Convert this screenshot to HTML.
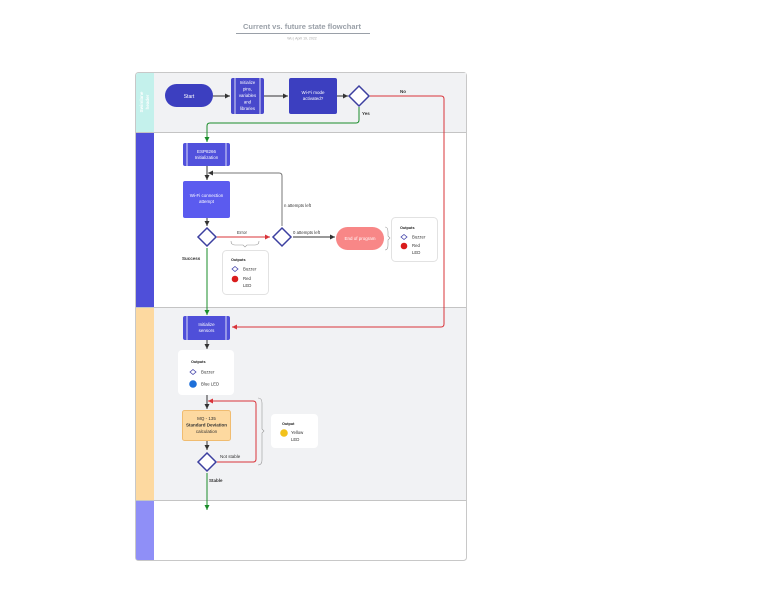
<!DOCTYPE html>
<html><head><meta charset="utf-8"><style>
body{margin:0;background:#fff;}
svg{display:block;font-family:"Liberation Sans",sans-serif;}
</style></head><body>
<svg width="768" height="593" viewBox="0 0 768 593">
<defs>
<marker id="ak" markerWidth="6" markerHeight="6" refX="5" refY="3" orient="auto"><path d="M0,0.5 L5,3 L0,5.5z" fill="#333"/></marker>
<marker id="ar" markerWidth="6" markerHeight="6" refX="5" refY="3" orient="auto"><path d="M0,0.5 L5,3 L0,5.5z" fill="#d9343a"/></marker>
<marker id="ag" markerWidth="6" markerHeight="6" refX="5" refY="3" orient="auto"><path d="M0,0.5 L5,3 L0,5.5z" fill="#1a8c2a"/></marker>
</defs>
<text x="302" y="29" font-size="7.5" font-weight="bold" fill="#9aa0a8" text-anchor="middle">Current vs. future state flowchart</text>
<line x1="236" y1="33.5" x2="370" y2="33.5" stroke="#9aa0a8" stroke-width="1"/>
<text x="302" y="39.5" font-size="3.5" fill="#aaa" text-anchor="middle">Wu  |  April 19, 2022</text>

<!-- lanes -->
<rect x="135.5" y="72.5" width="331" height="488" rx="3" fill="#fff" stroke="#c8c8c8"/>
<rect x="154" y="73" width="312" height="59" fill="#f1f2f4"/>
<rect x="154" y="308" width="312" height="192" fill="#f1f2f4"/>
<path d="M138,73 H154 V132 H136 V76 Q136,73 138,73z" fill="#c4f1ec"/>
<rect x="136" y="132" width="18" height="176" fill="#4f4fd9"/>
<rect x="136" y="308" width="18" height="192" fill="#fdd9a0"/>
<path d="M136,500 H154 V560 H138 Q136,560 136,558z" fill="#8f8ff7"/>
<line x1="136" y1="132.5" x2="466" y2="132.5" stroke="#c4c4c4"/>
<line x1="136" y1="307.5" x2="466" y2="307.5" stroke="#c4c4c4"/>
<line x1="136" y1="500.5" x2="466" y2="500.5" stroke="#c4c4c4"/>
<text transform="translate(143,102) rotate(-90)" font-size="4.5" font-weight="bold" fill="#fff" text-anchor="middle">Swimlane</text>
<text transform="translate(149,102) rotate(-90)" font-size="4.5" font-weight="bold" fill="#fff" text-anchor="middle">header</text>

<!-- connectors -->
<g fill="none" stroke-width="1">
<path d="M213,96 H230" stroke="#333" marker-end="url(#ak)"/>
<path d="M264,96 H288" stroke="#333" marker-end="url(#ak)"/>
<path d="M337,96 H348" stroke="#333" marker-end="url(#ak)"/>
<path d="M370,96 H441 Q444,96 444,99 V324 Q444,327 441,327 H232" stroke="#d9343a" marker-end="url(#ar)"/>
<path d="M359,107 V120 Q359,123 356,123 H210 Q207,123 207,126 V142" stroke="#1a8c2a" marker-end="url(#ag)"/>
<path d="M207,166 V180" stroke="#333" marker-end="url(#ak)"/>
<path d="M207,218 V226" stroke="#333" marker-end="url(#ak)"/>
<path d="M217,237 H270" stroke="#d9343a" marker-end="url(#ar)"/>
<path d="M282,226 V176 Q282,173 279,173 H208" stroke="#777" marker-end="url(#ak)"/>
<path d="M293,237 H335" stroke="#333" marker-end="url(#ak)"/>
<path d="M207,248 V315" stroke="#1a8c2a" marker-end="url(#ag)"/>
<path d="M207,340 V349" stroke="#333" marker-end="url(#ak)"/>
<path d="M207,395 V409" stroke="#333" marker-end="url(#ak)"/>
<path d="M207,440 V450" stroke="#333" marker-end="url(#ak)"/>
<path d="M217,462 H253 Q256,462 256,459 V404 Q256,401 253,401 H208" stroke="#d9343a" marker-end="url(#ar)"/>
<path d="M207,473 V510" stroke="#1a8c2a" marker-end="url(#ag)"/>
<path d="M231,241 Q231,245 235,245 H243 L245,247 L247,245 H255 Q259,245 259,241" stroke="#999" stroke-width="0.6"/>
<path d="M385,227 Q388,227 388,232 V236 L390,238 L388,240 V245 Q388,250 385,250" stroke="#999" stroke-width="0.6"/>
<path d="M258,398 Q262,398 262,403 V429 L264,431 L262,433 V460 Q262,465 258,465" stroke="#999" stroke-width="0.6"/>
</g>

<!-- shapes -->
<rect x="165" y="84" width="48" height="23" rx="11.5" fill="#3c3fc0"/>
<text x="189" y="98" font-size="5" fill="#fff" text-anchor="middle">Start</text>
<rect x="231" y="78" width="33" height="36" rx="2" fill="#4848cc"/>
<line x1="235" y1="78" x2="235" y2="114" stroke="#fff" stroke-width="0.8"/>
<line x1="260" y1="78" x2="260" y2="114" stroke="#fff" stroke-width="0.8"/>
<text font-size="4.3" fill="#fff" text-anchor="middle"><tspan x="247.5" y="84">Initialize</tspan><tspan x="247.5" y="90.5">pins,</tspan><tspan x="247.5" y="97">variables</tspan><tspan x="247.5" y="103.5">and</tspan><tspan x="247.5" y="110">libraries</tspan></text>
<rect x="289" y="78" width="48" height="36" rx="2" fill="#3c3fc0"/>
<text font-size="4.5" fill="#fff" text-anchor="middle"><tspan x="313" y="94">Wi-Fi mode</tspan><tspan x="313" y="100">activated?</tspan></text>
<path d="M359,86 L369,96 L359,106 L349,96z" fill="#fff" stroke="#3c3fa0" stroke-width="1.5"/>
<text x="400" y="93" font-size="4.5" font-weight="bold" fill="#333">No</text>
<text x="362" y="115" font-size="4.5" font-weight="bold" fill="#333">Yes</text>

<rect x="183" y="143" width="47" height="23" rx="2" fill="#5151dc"/>
<line x1="187" y1="143" x2="187" y2="166" stroke="#fff" stroke-width="0.8"/>
<line x1="226" y1="143" x2="226" y2="166" stroke="#fff" stroke-width="0.8"/>
<text font-size="4.5" fill="#fff" text-anchor="middle"><tspan x="206.5" y="153">ESP8266</tspan><tspan x="206.5" y="159">Initialization</tspan></text>
<rect x="183" y="181" width="47" height="37" rx="2" fill="#5b5bef"/>
<text font-size="4.5" fill="#fff" text-anchor="middle"><tspan x="206.5" y="197">Wi-Fi connection</tspan><tspan x="206.5" y="203">attempt</tspan></text>
<path d="M207,228 L216,237 L207,246 L198,237z" fill="#fff" stroke="#3c3fa0" stroke-width="1.5"/>
<path d="M282,228 L291,237 L282,246 L273,237z" fill="#fff" stroke="#3c3fa0" stroke-width="1.5"/>
<text x="237" y="234" font-size="4.5" fill="#333">Error</text>
<text x="284" y="207" font-size="4.3" fill="#333">n attempts left</text>
<text x="293" y="234" font-size="4.3" fill="#333">0 attempts left</text>
<text x="182" y="260" font-size="4.5" font-weight="bold" fill="#333">Success</text>
<rect x="336" y="227" width="48" height="23" rx="11.5" fill="#f88787"/>
<text x="360" y="240" font-size="4.5" fill="#fff" text-anchor="middle">End of program</text>

<rect x="391.5" y="217.5" width="46" height="44" rx="4" fill="#fff" stroke="#e2e2e2"/>
<text x="400" y="229" font-size="3.8" font-weight="bold" fill="#222">Outputs</text>
<path d="M404,234.5 L407,237 L404,239.5 L401,237z" fill="#fff" stroke="#4444aa" stroke-width="0.8"/>
<text x="412" y="238.5" font-size="4.3" fill="#333">Buzzer</text>
<circle cx="404" cy="246" r="3.3" fill="#d91c1c"/>
<text font-size="4.3" fill="#333"><tspan x="412" y="247">Red</tspan><tspan x="412" y="254">LED</tspan></text>

<rect x="222.5" y="250.5" width="46" height="44" rx="4" fill="#fff" stroke="#e2e2e2"/>
<text x="231" y="261" font-size="3.8" font-weight="bold" fill="#222">Outputs</text>
<path d="M235,266.5 L238,269 L235,271.5 L232,269z" fill="#fff" stroke="#4444aa" stroke-width="0.8"/>
<text x="243" y="270.5" font-size="4.3" fill="#333">Buzzer</text>
<circle cx="235" cy="279" r="3.3" fill="#d91c1c"/>
<text font-size="4.3" fill="#333"><tspan x="243" y="280">Red</tspan><tspan x="243" y="287">LED</tspan></text>

<rect x="183" y="316" width="47" height="24" rx="2" fill="#4f4fd9"/>
<line x1="187" y1="316" x2="187" y2="340" stroke="#fff" stroke-width="0.8"/>
<line x1="226" y1="316" x2="226" y2="340" stroke="#fff" stroke-width="0.8"/>
<text font-size="4.5" fill="#fff" text-anchor="middle"><tspan x="206.5" y="326">Initialize</tspan><tspan x="206.5" y="332">sensors</tspan></text>

<rect x="178" y="350" width="56" height="45" rx="4" fill="#fff"/>
<text x="191" y="363" font-size="3.8" font-weight="bold" fill="#222">Outputs</text>
<path d="M193,369.5 L196,372 L193,374.5 L190,372z" fill="#fff" stroke="#4444aa" stroke-width="0.8"/>
<text x="201" y="373.5" font-size="4.3" fill="#333">Buzzer</text>
<circle cx="193" cy="384" r="3.8" fill="#1e6fd9"/>
<text x="201" y="385.5" font-size="4.3" fill="#333">Blue LED</text>

<rect x="182.5" y="410.5" width="48" height="30" rx="2" fill="#fdd9a0" stroke="#f0bc70"/>
<text font-size="4.5" fill="#333" text-anchor="middle"><tspan x="206.5" y="420">MQ - 135</tspan><tspan x="206.5" y="426.5" font-weight="bold">Standard Deviation</tspan><tspan x="206.5" y="433">calculation</tspan></text>
<path d="M207,453 L216,462 L207,471 L198,462z" fill="#fff" stroke="#3c3fa0" stroke-width="1.5"/>
<text x="220" y="458" font-size="4.5" fill="#333">Not stable</text>
<text x="209" y="482" font-size="4.5" font-weight="bold" fill="#333">Stable</text>

<rect x="271" y="414" width="47" height="34" rx="4" fill="#fff"/>
<text x="282" y="425" font-size="3.8" font-weight="bold" fill="#222">Output</text>
<circle cx="284" cy="433" r="3.8" fill="#f2c21b"/>
<text font-size="4.3" fill="#333"><tspan x="291" y="434">Yellow</tspan><tspan x="291" y="441">LED</tspan></text>
</svg>
</body></html>
